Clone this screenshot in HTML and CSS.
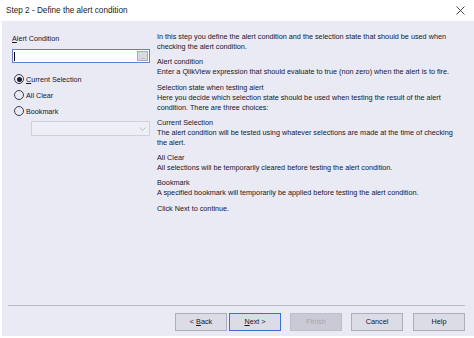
FILE: index.html
```html
<!DOCTYPE html>
<html lang="en">
<head>
    <meta charset="UTF-8">
    <title>Step 2 - Define the alert condition</title>
    <link rel="stylesheet" href="styles.css">
</head>
<body>
    <div class="window">
        <div class="titlebar">
            <span class="title">Step 2 - Define the alert condition</span>
            <svg class="close" width="9" height="9" viewBox="0 0 9 9">
                <path d="M0.5 0.5 L8.5 8.5 M8.5 0.5 L0.5 8.5" stroke="#333" stroke-width="0.9" fill="none"/>
            </svg>
        </div>

        <div class="client">
            <div class="content">
                <div class="settings">
                    <label class="field-label"><u>A</u>lert Condition</label>
                    <div class="expr-box">
                        <span class="caret"></span>
                        <span class="browse-btn">...</span>
                    </div>

                    <div class="radio-group">
                        <div class="radio-row"><span class="radio checked"></span><span><u>C</u>urrent Selection</span></div>
                        <div class="radio-row"><span class="radio"></span><span>All Clear</span></div>
                        <div class="radio-row"><span class="radio"></span><span>Bookmark</span></div>
                    </div>

                    <div class="bookmark-select">
                        <svg width="7" height="4" viewBox="0 0 7 4">
                            <path d="M0.5 0.5 L3.5 3.5 L6.5 0.5" stroke="#b4b4c2" stroke-width="0.9" fill="none"/>
                        </svg>
                    </div>
                </div>

                <div class="help-text">
                    <p>In this step you define the alert condition and the selection state that should be used when checking the alert condition.</p>
                    <p>Alert condition<br>Enter a QlikView expression that should evaluate to true (non zero) when the alert is to fire.</p>
                    <p>Selection state when testing alert<br>Here you decide which selection state should be used when testing the result of the alert condition. There are three choices:</p>
                    <p>Current Selection<br>The alert condition will be tested using whatever selections are made at the time of checking the alert.</p>
                    <p>All Clear<br>All selections will be temporarily cleared before testing the alert condition.</p>
                    <p>Bookmark<br>A specified bookmark will temporarily be applied before testing the alert condition.</p>
                    <p>Click Next to continue.</p>
                </div>
            </div>

            <div class="footer">
                <div class="separator"></div>
                <div class="buttons">
                    <div class="btn">&lt; <u>B</u>ack</div>
                    <div class="btn btn-default"><u>N</u>ext &gt;</div>
                    <div class="btn btn-disabled">Finish</div>
                    <div class="btn">Cancel</div>
                    <div class="btn">Help</div>
                </div>
            </div>
        </div>
    </div>
</body>
</html>
```

FILE: styles.css
```css
body {
    margin: 0;
    background-color: #ffffff;
    font-family: "Liberation Sans", Arial, sans-serif;
    color: #16162a;
}
.window {
    width: 474px;
    height: 338px;
    display: flex;
    flex-direction: column;
}
.titlebar {
    height: 21px;
    display: flex;
    align-items: center;
    justify-content: space-between;
    padding: 0 9px 0 6px;
    box-sizing: border-box;
}
.title {
    font-size: 8.2px;
    color: #222222;
}
.client {
    margin-left: 2px;
    height: 315px;
    background-color: #eaeaf4;
    display: flex;
    flex-direction: column;
}
.content {
    display: flex;
    padding-top: 11px;
}
.settings {
    width: 138px;
    margin-left: 10px;
    padding-top: 2px;
    font-size: 7.2px;
}
.field-label {
    display: block;
    line-height: 10px;
}
.expr-box {
    margin-top: 5px;
    height: 14px;
    box-sizing: border-box;
    border: 1px solid #5b82cc;
    background-color: #ffffff;
    display: flex;
    align-items: center;
    justify-content: space-between;
    padding: 0 1px;
}
.caret {
    width: 1px;
    height: 9px;
    background-color: #000000;
}
.browse-btn {
    width: 11px;
    height: 10px;
    box-sizing: border-box;
    border: 1px solid #a9a9b9;
    background-color: #d9d9e3;
    font-size: 6px;
    line-height: 11px;
    color: #66667a;
    text-align: center;
}
.radio-group {
    margin-top: 8px;
}
.radio-row {
    height: 16px;
    display: flex;
    align-items: center;
    gap: 2px;
}
.radio {
    width: 10px;
    height: 10px;
    margin-left: 2px;
    box-sizing: border-box;
    border: 1px solid #3c3c4c;
    border-radius: 50%;
    display: flex;
    align-items: center;
    justify-content: center;
}
.radio.checked::after {
    content: "";
    width: 5px;
    height: 5px;
    border-radius: 50%;
    background-color: #1e1e2c;
}
.bookmark-select {
    margin: 2px 0 0 19px;
    width: 119px;
    height: 15px;
    box-sizing: border-box;
    border: 1px solid #d0d0dc;
    background-color: #eeeef6;
    display: flex;
    align-items: center;
    justify-content: flex-end;
    padding-right: 3px;
}
.help-text {
    width: 302px;
    margin-left: 7px;
    font-size: 7.25px;
    line-height: 10px;
}
.help-text p {
    margin: 0 0 5.3px;
}
.footer {
    margin-top: auto;
    padding-bottom: 5px;
}
.separator {
    height: 1px;
    margin: 0 9px 0 6px;
    background-color: #b9b9c9;
}
.buttons {
    display: flex;
    justify-content: flex-end;
    padding-right: 9px;
    margin-top: 7px;
}
.btn {
    width: 52px;
    height: 18px;
    box-sizing: border-box;
    border: 1px solid #adadbe;
    background-color: #dcdce6;
    font-size: 7.25px;
    line-height: 16px;
    text-align: center;
    margin-left: 9px;
}
.btn:first-child {
    margin-left: 0;
}
.btn-default {
    margin-left: 2px;
    border-color: #3d6fd0;
}
.btn-disabled {
    background-color: #cacad7;
    border-color: #bdbdcc;
    color: #a3a3b3;
}
.btn:last-child {
    margin-left: 10px;
}
```
